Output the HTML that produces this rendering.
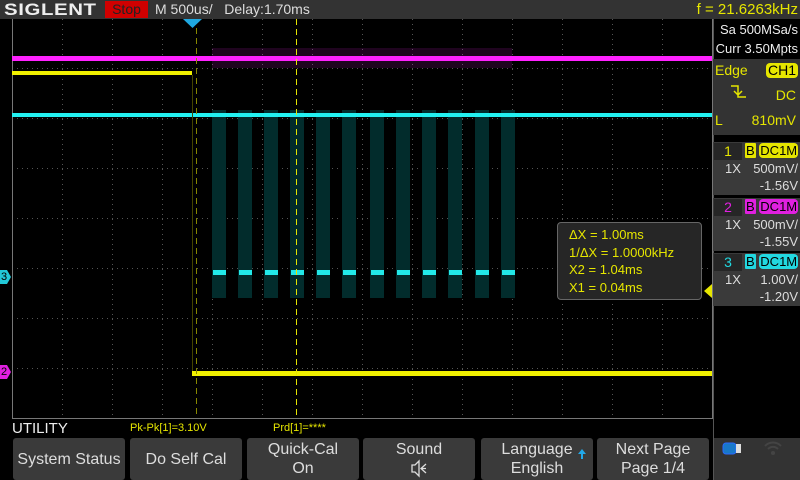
<!DOCTYPE html>
<html><head><meta charset="utf-8"><style>
*{margin:0;padding:0;box-sizing:border-box}
body{width:800px;height:480px;background:#000;overflow:hidden;position:relative;font-family:"Liberation Sans",sans-serif}
.a{position:absolute;white-space:nowrap}
.y{color:#e6e600}
.btn{position:absolute;top:438px;height:42px;width:112px;background:#3a3a3a;border-radius:3px;color:#ddd;font-size:16px;text-align:center;line-height:19px;display:flex;flex-direction:column;justify-content:center;align-items:center}
.pn{position:absolute;left:713px;width:87px;background:#333}
.tag{display:inline-block;border-radius:4px;padding:0 2px;color:#000;line-height:15px}
</style></head><body>
<div class="a" style="left:0;top:0;width:800px;height:19px;background:#333"></div>
<div class="a" style="left:4px;top:0px;font-size:17px;font-weight:bold;color:#eee;letter-spacing:0.5px;line-height:19px;transform:scaleX(1.2);transform-origin:left">SIGLENT</div>
<div class="a" style="left:105px;top:1px;width:43px;height:17px;background:#d00000;color:#222;font-size:14px;line-height:17px;text-align:center">Stop</div>
<div class="a" style="left:155px;top:0;color:#ddd;font-size:14px;line-height:19px">M 500us/&nbsp;&nbsp; Delay:1.70ms</div>
<div class="a y" style="right:2px;top:0;font-size:15px;line-height:19px">f = 21.6263kHz</div>

<svg class="a" style="left:0;top:0" width="800" height="480">
<g stroke="#555" stroke-width="1" stroke-dasharray="1,4">
<line x1="62.5" y1="19" x2="62.5" y2="418"/><line x1="112.5" y1="19" x2="112.5" y2="418"/><line x1="162.5" y1="19" x2="162.5" y2="418"/><line x1="212.5" y1="19" x2="212.5" y2="418"/><line x1="262.5" y1="19" x2="262.5" y2="418"/><line x1="312.5" y1="19" x2="312.5" y2="418"/><line x1="362.5" y1="19" x2="362.5" y2="418"/><line x1="412.5" y1="19" x2="412.5" y2="418"/><line x1="462.5" y1="19" x2="462.5" y2="418"/><line x1="512.5" y1="19" x2="512.5" y2="418"/><line x1="562.5" y1="19" x2="562.5" y2="418"/><line x1="612.5" y1="19" x2="612.5" y2="418"/><line x1="662.5" y1="19" x2="662.5" y2="418"/>
<line x1="12" y1="68.5" x2="712" y2="68.5"/><line x1="12" y1="118.5" x2="712" y2="118.5"/><line x1="12" y1="168.5" x2="712" y2="168.5"/><line x1="12" y1="218.5" x2="712" y2="218.5"/><line x1="12" y1="268.5" x2="712" y2="268.5"/><line x1="12" y1="318.5" x2="712" y2="318.5"/><line x1="12" y1="368.5" x2="712" y2="368.5"/>
</g>
<polyline points="12.5,19 12.5,418.5 712.5,418.5 712.5,19" fill="none" stroke="#777"/>
<g fill="#022c2c">
<rect x="212" y="110" width="14" height="188"/><rect x="238" y="110" width="14" height="188"/><rect x="264" y="110" width="14" height="188"/><rect x="290" y="110" width="14" height="188"/><rect x="316" y="110" width="14" height="188"/><rect x="342" y="110" width="14" height="188"/><rect x="370" y="110" width="14" height="188"/><rect x="396" y="110" width="14" height="188"/><rect x="422" y="110" width="14" height="188"/><rect x="448" y="110" width="14" height="188"/><rect x="475" y="110" width="14" height="188"/><rect x="501" y="110" width="14" height="188"/>
</g>
<g fill="#22e8e8">
<rect x="213" y="270" width="13" height="5"/><rect x="239" y="270" width="13" height="5"/><rect x="265" y="270" width="13" height="5"/><rect x="291" y="270" width="13" height="5"/><rect x="317" y="270" width="13" height="5"/><rect x="343" y="270" width="13" height="5"/><rect x="371" y="270" width="13" height="5"/><rect x="397" y="270" width="13" height="5"/><rect x="423" y="270" width="13" height="5"/><rect x="449" y="270" width="13" height="5"/><rect x="476" y="270" width="13" height="5"/><rect x="502" y="270" width="13" height="5"/>
</g>
<rect x="12" y="113" width="700" height="4" fill="#22f0f0"/>
<rect x="12" y="56" width="700" height="5" fill="#ff22ff"/>
<rect x="212" y="48" width="300" height="20" fill="#ff22ff" opacity="0.12"/>
<rect x="12" y="71" width="180" height="4" fill="#f0f000"/>
<line x1="192.5" y1="75" x2="192.5" y2="376" stroke="#444400"/>
<rect x="192" y="371" width="520" height="5" fill="#f0f000"/>
<line x1="196.5" y1="28" x2="196.5" y2="418" stroke="#888800" stroke-dasharray="6,4"/>
<line x1="296.5" y1="19" x2="296.5" y2="418" stroke="#e6e600" stroke-dasharray="6,4"/>
<polygon points="183,19 202,19 192.5,28" fill="#1fa8e0"/>
<polygon points="0,270 7,270 11,277 7,284 0,284" fill="#22c8d8"/>
<polygon points="0,365 7,365 11,372 7,379 0,379" fill="#e020e0"/>
<polygon points="712,284 704,291 712,298" fill="#e6e600"/>
</svg>
<div class="a" style="left:0;top:270px;font-size:11px;line-height:14px;width:8px;text-align:center;color:#000">3</div>
<div class="a" style="left:0;top:365px;font-size:11px;line-height:14px;width:8px;text-align:center;color:#000">2</div>

<div class="a" style="left:557px;top:222px;width:145px;height:78px;background:#262626;border:1px solid #666;border-radius:4px;color:#e6e600;font-size:13px;line-height:17.5px;padding:3px 0 0 11px">ΔX = 1.00ms<br>1/ΔX = 1.0000kHz<br>X2 = 1.04ms<br>X1 = 0.04ms</div>

<div class="a" style="left:713px;top:19px;width:87px;height:461px;border-left:1px solid #555"></div>
<div class="a" style="right:2px;top:20px;color:#eee;font-size:13px;line-height:19px">Sa 500MSa/s</div>
<div class="a" style="right:2px;top:39px;color:#eee;font-size:13px;line-height:19px">Curr 3.50Mpts</div>
<div class="pn" style="top:59px;height:76px"></div>
<div class="a y" style="left:715px;top:62px;font-size:14px">Edge</div>
<div class="a" style="left:766px;top:62px;font-size:14px"><span class="tag" style="background:#e6e600">CH1</span></div>
<svg class="a" style="left:730px;top:84px" width="20" height="16"><path d="M1 2H8V13H16M4 7L8 11L12 7" stroke="#e6e600" stroke-width="1.5" fill="none"/></svg>
<div class="a y" style="right:4px;top:87px;font-size:14px">DC</div>
<div class="a y" style="left:715px;top:112px;font-size:14px">L</div>
<div class="a y" style="right:4px;top:112px;font-size:14px">810mV</div>

<div class="pn" style="top:142px;height:53px;background:#3a3a3a"></div>
<div class="a" style="left:714px;top:143px;width:28px;height:17px;background:#262626;color:#e6e600;font-size:14px;text-align:center;line-height:17px">1</div>
<div class="a" style="left:745px;top:143px;font-size:13px;line-height:16px"><span class="tag" style="background:#e6e600;border-radius:1px;padding:0 1px">B</span> <span class="tag" style="background:#e6e600;padding:0 1px">DC1M</span></div>
<div class="a" style="left:725px;top:160px;color:#ddd;font-size:13px;line-height:17px">1X</div>
<div class="a" style="right:2px;top:160px;color:#ddd;font-size:13px;line-height:17px;text-align:right">500mV/<br>-1.56V</div>

<div class="pn" style="top:198px;height:53px;background:#3a3a3a"></div>
<div class="a" style="left:714px;top:199px;width:28px;height:17px;background:#262626;color:#e020e0;font-size:14px;text-align:center;line-height:17px">2</div>
<div class="a" style="left:745px;top:199px;font-size:13px;line-height:16px"><span class="tag" style="background:#e020e0;border-radius:1px;padding:0 1px">B</span> <span class="tag" style="background:#e020e0;padding:0 1px">DC1M</span></div>
<div class="a" style="left:725px;top:216px;color:#ddd;font-size:13px;line-height:17px">1X</div>
<div class="a" style="right:2px;top:216px;color:#ddd;font-size:13px;line-height:17px;text-align:right">500mV/<br>-1.55V</div>

<div class="pn" style="top:253px;height:53px;background:#3a3a3a"></div>
<div class="a" style="left:714px;top:254px;width:28px;height:17px;background:#262626;color:#22d8e0;font-size:14px;text-align:center;line-height:17px">3</div>
<div class="a" style="left:745px;top:254px;font-size:13px;line-height:16px"><span class="tag" style="background:#22d8e0;border-radius:1px;padding:0 1px">B</span> <span class="tag" style="background:#22d8e0;padding:0 1px">DC1M</span></div>
<div class="a" style="left:725px;top:271px;color:#ddd;font-size:13px;line-height:17px">1X</div>
<div class="a" style="right:2px;top:271px;color:#ddd;font-size:13px;line-height:17px;text-align:right">1.00V/<br>-1.20V</div>

<div class="a" style="left:12px;top:420px;color:#eee;font-size:15px;line-height:18px">UTILITY</div>
<div class="a y" style="left:130px;top:422px;font-size:11px">Pk-Pk[1]=3.10V</div>
<div class="a y" style="left:273px;top:422px;font-size:11px">Prd[1]=****</div>
<div class="btn" style="left:13px">System Status</div>
<div class="btn" style="left:130px">Do Self Cal</div>
<div class="btn" style="left:247px">Quick-Cal<br>On</div>
<div class="btn" style="left:363px"><span>Sound</span><svg width="20" height="19" viewBox="0 0 20 19"><path d="M3 6H6L10 2V17L6 13H3Z" fill="none" stroke="#ddd" stroke-width="1.3"/><path d="M17 5L12 9.5L17 14M12 9.5H17" fill="none" stroke="#ddd" stroke-width="1.3"/></svg></div>
<div class="btn" style="left:481px">Language<br>English</div>
<svg class="a" style="left:577px;top:448px" width="10" height="12"><path d="M5 1L9 6H6V11H4V6H1Z" fill="#22a8e8"/></svg>
<div class="btn" style="left:597px">Next Page<br>Page 1/4</div>
<div class="a" style="left:714px;top:438px;width:86px;height:42px;background:#333"></div>
<svg class="a" style="left:722px;top:442px" width="20" height="14"><rect x="1" y="1" width="13" height="11" rx="3" fill="#1878c8" stroke="#2a6aff"/><rect x="14" y="2" width="5" height="9" fill="#ddd"/></svg>
<svg class="a" style="left:763px;top:440px" width="20" height="16"><g fill="none" stroke="#444" stroke-width="2"><path d="M2 6A11 11 0 0 1 18 6"/><path d="M5 9A7 7 0 0 1 15 9"/></g><circle cx="10" cy="13" r="2" fill="#444"/></svg>
</body></html>
